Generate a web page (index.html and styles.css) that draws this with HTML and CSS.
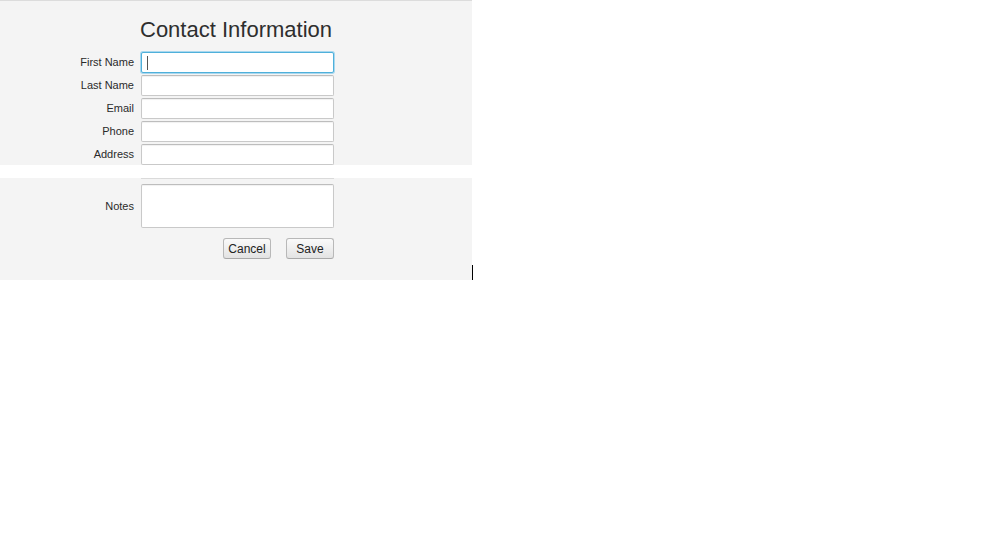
FILE: index.html
```html
<!DOCTYPE html>
<html lang="en">
<head>
<meta charset="utf-8">
<title>Contact Information</title>
<link rel="stylesheet" href="styles.css">
</head>
<body>
<div class="app">
  <section class="panel panel-top">
    <h1 class="title">Contact Information</h1>
    <div class="form-grid">
      <label class="label">First Name</label>
      <div class="field focused"><span class="caret"></span></div>
      <label class="label">Last Name</label>
      <div class="field"></div>
      <label class="label">Email</label>
      <div class="field"></div>
      <label class="label">Phone</label>
      <div class="field"></div>
      <label class="label">Address</label>
      <div class="field field-last"></div>
    </div>
  </section>
  <section class="panel panel-bottom">
    <div class="form-grid form-grid-bottom">
      <span class="label"></span>
      <div class="edge-line"></div>
      <label class="label label-notes">Notes</label>
      <div class="field notes"></div>
      <span class="label"></span>
      <div class="actions">
        <button class="btn" type="button">Cancel</button>
        <button class="btn" type="button">Save</button>
      </div>
    </div>
    <span class="mouse-cursor"></span>
  </section>
</div>
</body>
</html>
```
FILE: styles.css
```css
html, body {
  margin: 0;
  padding: 0;
  background: #ffffff;
}

body {
  font-family: "Liberation Sans", Arial, sans-serif;
  color: #333333;
}

.app {
  width: 472px;
}

.panel {
  background: #f4f4f4;
  box-sizing: border-box;
  position: relative;
}

.panel-top {
  height: 165px;
  border-top: 1px solid #dcdcdc;
  padding-top: 16px;
  overflow: hidden;
}

.title {
  margin: 0;
  font-size: 22px;
  line-height: 26px;
  font-weight: normal;
  text-align: center;
  color: #2e2e2e;
}

.form-grid {
  display: grid;
  grid-template-columns: 134px 193px;
  column-gap: 7px;
  row-gap: 2px;
  margin-top: 9px;
}

.label {
  font-size: 11px;
  line-height: 21px;
  text-align: right;
  color: #2a2a2a;
}

.field {
  box-sizing: border-box;
  height: 21px;
  background: #ffffff;
  border: 1px solid #c9c9c9;
  border-top-color: #bdbdbd;
  border-radius: 2px;
  box-shadow: inset 0 1px 1px rgba(0, 0, 0, 0.06);
  display: flex;
  align-items: center;
  padding-left: 5px;
}

.field.focused {
  border-color: #4fb0da;
  box-shadow: 0 0 0 1px #a9d8ef;
}

.caret {
  width: 1px;
  height: 14px;
  background: #555555;
}

.panel-bottom {
  height: 102px;
  margin-top: 13px;
}

.form-grid-bottom {
  margin-top: 0;
  row-gap: 0;
}

.edge-line {
  height: 1px;
  background: #dadada;
  margin-bottom: 5px;
}

.label-notes {
  line-height: 44px;
}

.field.notes {
  height: 44px;
}

.actions {
  display: flex;
  justify-content: flex-end;
  gap: 15px;
  margin-top: 10px;
}

.btn {
  box-sizing: border-box;
  width: 48px;
  height: 21px;
  padding: 0;
  font-family: "Liberation Sans", Arial, sans-serif;
  font-size: 12px;
  color: #222222;
  background: linear-gradient(#fafafa, #e3e3e3);
  border: 1px solid #b8b8b8;
  border-bottom-color: #a9a9a9;
  border-radius: 3px;
}

.mouse-cursor {
  position: absolute;
  left: 472px;
  top: 87px;
  width: 1px;
  height: 15px;
  background: #000000;
}
```
